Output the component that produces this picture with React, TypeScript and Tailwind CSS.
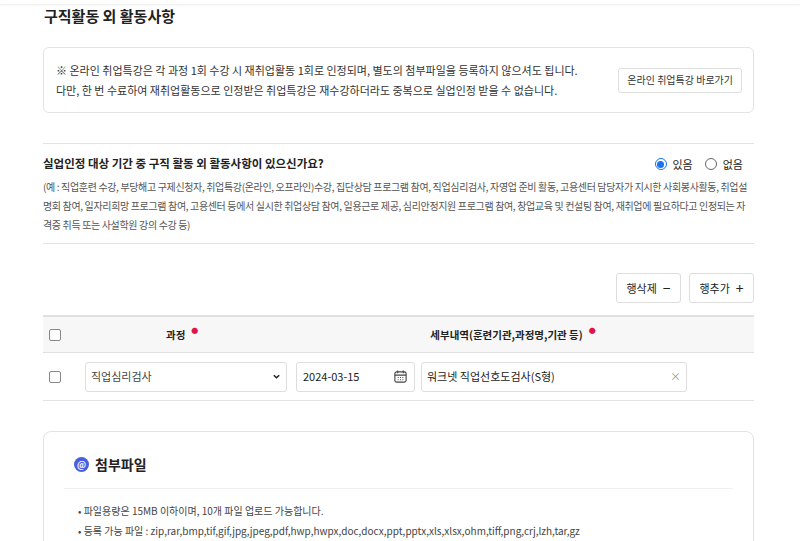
import React from "react";

export default function App() {
  const font = { fontFamily: '"Noto Sans CJK KR", "Noto Sans", sans-serif' };
  return (
    <div className="w-[800px] h-[541px] overflow-hidden bg-white text-[#222]" style={font}>
      <div className="h-[4px] shadow-[0_1px_3px_rgba(0,0,0,0.08)]" />
      <div className="mx-[43px] w-[711px]">
        <h2 className="text-[15px] font-bold leading-[22px] mt-[1px] ml-[1px]">구직활동 외 활동사항</h2>
        <div className="mt-[20px] h-[66px] border border-[#e3e3e3] rounded-[6px] flex items-center justify-between pl-[12px] pr-[11px] text-[11px] leading-[20px] text-[#333]">
          <div>
            <p>※ 온라인 취업특강은 각 과정 1회 수강 시 재취업활동 1회로 인정되며, 별도의 첨부파일을 등록하지 않으셔도 됩니다.</p>
            <p>다만, 한 번 수료하여 재취업활동으로 인정받은 취업특강은 재수강하더라도 중복으로 실업인정 받을 수 없습니다.</p>
          </div>
          <button className="h-[25px] px-[8px] border border-[#ddd] rounded-[3px] text-[10px] bg-white">온라인 취업특강 바로가기</button>
        </div>
        <div className="mt-[30px] border-t border-[#e3e3e3] pt-[10px]">
          <div className="flex items-center justify-between h-[20px]">
            <span className="text-[11.5px] font-semibold">실업인정 대상 기간 중 구직 활동 외 활동사항이 있으신가요?</span>
            <div className="flex items-center gap-[6px] text-[11px] mr-[11px]">
              <span className="w-[12px] h-[12px] rounded-full border border-[#1a73e8] flex items-center justify-center"><span className="w-[7px] h-[7px] rounded-full bg-[#1a73e8]" /></span>
              <span>있음</span>
              <span className="w-[12px] h-[12px] rounded-full border border-[#666] ml-[6px]" />
              <span>없음</span>
            </div>
          </div>
          <p className="mt-[3px] text-[10px] leading-[19px] text-[#555] tracking-[-0.35px] pr-[2px]">
            (예 : 직업훈련 수강, 부당해고 구제신청자, 취업특강(온라인, 오프라인)수강, 집단상담 프로그램 참여, 직업심리검사, 자영업 준비 활동, 고용센터 담당자가 지시한 사회봉사활동, 취업설명회 참여, 일자리희망 프로그램 참여, 고용센터 등에서 실시한 취업상담 참여, 일용근로 제공, 심리안정지원 프로그램 참여, 창업교육 및 컨설팅 참여, 재취업에 필요하다고 인정되는 자격증 취득 또는 사설학원 강의 수강 등)
          </p>
        </div>
        <div className="mt-[9px] border-t border-[#e3e3e3]" />
        <div className="mt-[29px] flex justify-end gap-[8px]">
          <button className="h-[30px] w-[65px] border border-[#ddd] rounded-[3px] text-[11px] flex items-center justify-center gap-[6px]">행삭제 <span className="text-[14px]">−</span></button>
          <button className="h-[30px] w-[65px] border border-[#ddd] rounded-[3px] text-[11px] flex items-center justify-center gap-[6px]">행추가 <span className="text-[14px]">+</span></button>
        </div>
        <div className="mt-[12px] border-t-2 border-[#e0e0e0] bg-[#f7f7f7] h-[38px] flex items-center text-[10.5px] font-semibold border-b border-b-[#e0e0e0]">
          <span className="ml-[6px] w-[12px] h-[12px] border border-[#888] rounded-[2px] bg-white" />
          <span className="ml-[105px]">과정</span><span className="text-[#e0134c] text-[7px] -mt-[8px] ml-[6px]">●</span>
          <span className="ml-[232px]">세부내역(훈련기관,과정명,기관 등)</span><span className="text-[#e0134c] text-[7px] -mt-[8px] ml-[6px]">●</span>
        </div>
        <div className="h-[48px] flex items-center border-b border-[#e3e3e3] text-[11px]">
          <span className="ml-[6px] w-[12px] h-[12px] border border-[#888] rounded-[2px]" />
          <div className="ml-[24px] w-[202px] h-[30px] border border-[#ddd] rounded-[3px] flex items-center justify-between px-[5px] text-[#444]">
            직업심리검사
            <svg width="9" height="9" viewBox="0 0 10 10"><path d="M2 3.5 L5 6.5 L8 3.5" stroke="#222" strokeWidth="1.6" fill="none" /></svg>
          </div>
          <div className="ml-[9px] w-[119px] h-[30px] border border-[#ddd] rounded-[3px] flex items-center justify-between px-[6px]">
            2024-03-15
            <svg width="15" height="15" viewBox="0 0 16 16" fill="none" stroke="#444" strokeWidth="1.2"><rect x="2" y="3" width="12" height="11" rx="2" /><path d="M5 1.5v3M11 1.5v3M2 6.5h12" /><path d="M5 9h1M7.5 9h1M10 9h1M5 11.5h1M7.5 11.5h1M10 11.5h1" /></svg>
          </div>
          <div className="ml-[6px] w-[266px] h-[30px] border border-[#ddd] rounded-[3px] flex items-center justify-between px-[5px]">
            워크넷 직업선호도검사(S형)
            <span className="text-[#999] text-[11px]">×</span>
          </div>
        </div>
        <div className="mt-[30px] border border-[#e3e3e3] rounded-[8px] h-[200px] px-[20px] pt-[22px]">
          <div className="flex items-center gap-[6px] ml-[10px]">
            <span className="w-[15px] h-[15px] rounded-full bg-[#4a5fe0] flex items-center justify-center text-white text-[9px] font-bold">@</span>
            <span className="text-[14px] font-bold">첨부파일</span>
          </div>
          <div className="mt-[13px] border-t border-[#f0f0f0]" />
          <ul className="mt-[12px] ml-[14px] text-[10px] leading-[20px] text-[#444]">
            <li>• 파일용량은 15MB 이하이며, 10개 파일 업로드 가능합니다.</li>
            <li className="whitespace-nowrap">• 등록 가능 파일 : zip,rar,bmp,tif,gif,jpg,jpeg,pdf,hwp,hwpx,doc,docx,ppt,pptx,xls,xlsx,ohm,tiff,png,crj,lzh,tar,gz</li>
          </ul>
        </div>
      </div>
    </div>
  );
}
